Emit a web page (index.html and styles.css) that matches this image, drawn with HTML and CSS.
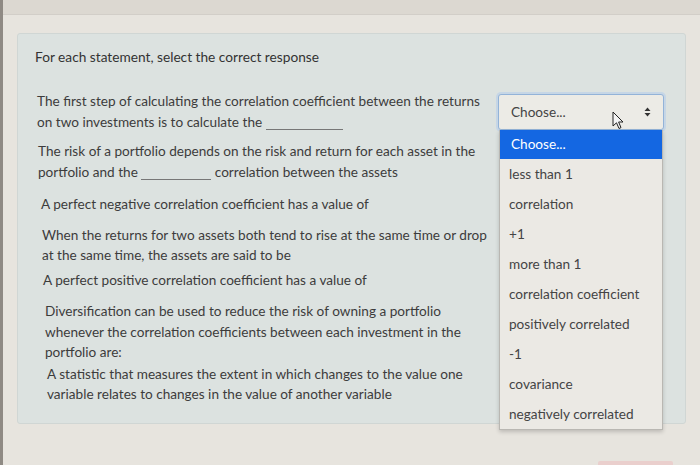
FILE: index.html
```html
<!DOCTYPE html>
<html lang="en">
<head>
<meta charset="utf-8">
<title>Matching question</title>
<link rel="stylesheet" href="styles.css">
</head>
<body>
<div class="screen">
  <div class="topband"></div>
  <div class="panel">
    <p class="title">For each statement, select the correct response</p>
    <div class="qa">
      <div class="statements">
        <p class="s">The first step of calculating the correlation coefficient between the returns<br>on two investments is to calculate the <span class="blank b1"></span></p>
        <p class="s">The risk of a portfolio depends on the risk and return for each asset in the<br>portfolio and the <span class="blank b2"></span> correlation between the assets</p>
        <p class="s">A perfect negative correlation coefficient has a value of</p>
        <p class="s">When the returns for two assets both tend to rise at the same time or drop<br>at the same time, the assets are said to be</p>
        <p class="s">A perfect positive correlation coefficient has a value of</p>
        <p class="s">Diversification can be used to reduce the risk of owning a portfolio<br>whenever the correlation coefficients between each investment in the<br>portfolio are:</p>
        <p class="s">A statistic that measures the extent in which changes to the value one<br>variable relates to changes in the value of another variable</p>
      </div>
      <div class="answer">
        <div class="select">
          <span class="select-text">Choose...</span>
          <svg class="updown" width="7" height="10" viewBox="0 0 7 10"><path d="M3.5 0.5 L6.5 4 L0.5 4 Z M3.5 9.5 L6.5 6 L0.5 6 Z" fill="#333"/></svg>
        </div>
        <ul class="dropdown">
          <li class="opt active">Choose...</li>
          <li class="opt">less than 1</li>
          <li class="opt">correlation</li>
          <li class="opt">+1</li>
          <li class="opt">more than 1</li>
          <li class="opt">correlation coefficient</li>
          <li class="opt">positively correlated</li>
          <li class="opt">-1</li>
          <li class="opt">covariance</li>
          <li class="opt">negatively correlated</li>
        </ul>
        <svg class="cursor" width="12" height="19" viewBox="0 0 12 19"><path d="M1 1 L1 15 L4.5 11.8 L7 17.5 L9 16.6 L6.6 11 L11 11 Z" fill="#f4f4f4" stroke="#222" stroke-width="1" stroke-linejoin="round"/></svg>
      </div>
    </div>
  </div>
  <div class="pinkbar"></div>
</div>
</body>
</html>
```

FILE: styles.css
```css
html, body {
  margin: 0;
  padding: 0;
}
body {
  background: #e6e3dd;
  font-family: Lato, "Open Sans", sans-serif;
  color: #3a3a3a;
}
.screen {
  position: relative;
  width: 700px;
  height: 465px;
  overflow: hidden;
  border-left: 3px solid #8f8a84;
  box-sizing: border-box;
  background: #e7e4de;
}
.topband {
  height: 14px;
  background: #dcd8d1;
  border-bottom: 1px solid #d2cec8;
}
.panel {
  margin: 18px 0 0 14px;
  width: 669px;
  height: 391px;
  box-sizing: border-box;
  background: #dce2e0;
  border: 1px solid #d0d6d4;
  border-radius: 3px;
  padding: 13px 0 0 17px;
}
.title {
  margin: 0;
  font-size: 13.7px;
  line-height: 20px;
  color: #333;
}
.qa {
  display: flex;
  margin-top: 24px;
}
.statements {
  width: 463px;
  flex: none;
}
.s {
  margin: 0;
  font-size: 13.6px;
  line-height: 20.5px;
  color: #3c3c3c;
  white-space: nowrap;
}
.s:nth-child(1) { margin-left: 2px; margin-top: 0; }
.s:nth-child(2) { margin-left: 3px; margin-top: 9px; }
.s:nth-child(3) { margin-left: 6px; margin-top: 12px; }
.s:nth-child(4) { margin-left: 7px; margin-top: 10px; }
.s:nth-child(5) { margin-left: 8px; margin-top: 4px; }
.s:nth-child(6) { margin-left: 10px; margin-top: 11px; }
.s:nth-child(7) { margin-left: 12px; margin-top: 1px; }
.blank {
  display: inline-block;
  border-bottom: 1px solid #777;
  vertical-align: -3px;
}
.b1 { width: 77px; }
.b2 { width: 70px; }
.answer {
  position: relative;
  margin-top: 3px;
  width: 166px;
  flex: none;
}
.select {
  display: flex;
  align-items: center;
  justify-content: space-between;
  height: 36px;
  box-sizing: border-box;
  padding: 0 12px 0 12px;
  background: #ecebe6;
  border: 1px solid #93b3d8;
  border-radius: 3px;
  box-shadow: 0 0 0 2px #c6d6e6;
  font-size: 13.6px;
  color: #444;
}
.updown {
  display: block;
}
.dropdown {
  position: absolute;
  top: 36px;
  left: 1px;
  width: 164px;
  margin: 0;
  padding: 0;
  list-style: none;
  background: #ebe9e4;
  border: 1px solid #b9b7b2;
  border-top: none;
  box-shadow: 0 2px 4px rgba(0,0,0,0.18);
  box-sizing: border-box;
}
.opt {
  height: 30px;
  line-height: 30px;
  padding-left: 9px;
  font-size: 13.6px;
  color: #444;
  white-space: nowrap;
}
.opt.active {
  background: #1467e2;
  color: #fff;
  height: 29px;
  line-height: 29px;
  padding-left: 11px;
}
.cursor {
  position: absolute;
  left: 114px;
  top: 17px;
}
.pinkbar {
  position: absolute;
  left: 595px;
  top: 461px;
  width: 75px;
  height: 6px;
  background: #eacfcd;
  border-radius: 2px;
}
```
